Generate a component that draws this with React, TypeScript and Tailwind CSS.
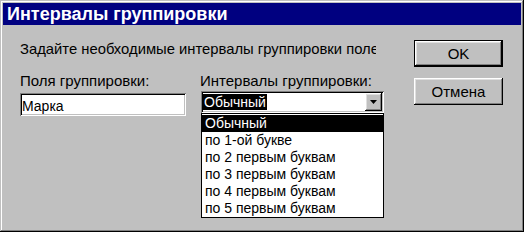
import React from "react";

const sunken =
  "shadow-[inset_1px_1px_0_#808080,inset_-1px_-1px_0_#ffffff,inset_2px_2px_0_#000000,inset_-2px_-2px_0_#c0c0c0]";
const raised =
  "shadow-[inset_-1px_-1px_0_#000000,inset_1px_1px_0_#ffffff,inset_-2px_-2px_0_#808080,inset_2px_2px_0_#dfdfdf]";

const options = [
  "Обычный",
  "по 1-ой букве",
  "по 2 первым буквам",
  "по 3 первым буквам",
  "по 4 первым буквам",
  "по 5 первым буквам",
];

function Win95Button({ label, isDefault }: { label: string; isDefault?: boolean }) {
  return (
    <div className={isDefault ? "border border-black" : ""}>
      <div
        className={`flex items-center justify-center bg-[#c0c0c0] ${
          isDefault ? "h-[25px]" : "h-[27px]"
        } ${raised}`}
      >
        <span className="text-[15px] leading-[17px] text-black">{label}</span>
      </div>
    </div>
  );
}

function ComboBox() {
  return (
    <div className={`relative h-[22px] w-[183px] bg-white ${sunken}`}>
      <div className="flex h-full items-stretch p-[2px]">
        <div className="flex flex-1 items-start pt-[1px]">
          <span className="bg-black px-[1px] text-[14px] leading-[16px] text-white">
            Обычный
          </span>
        </div>
        <div className={`flex w-[17px] items-center justify-center bg-[#c0c0c0] ${raised}`}>
          <svg width="7" height="4" viewBox="0 0 7 4">
            <path d="M0 0h7L3.5 4z" fill="#000" />
          </svg>
        </div>
      </div>
      <ul className="absolute left-0 top-full w-[183px] border border-black bg-white pt-[1px]">
        {options.map((o, i) => (
          <li
            key={o}
            className={`h-[17px] whitespace-nowrap pl-[3px] text-[14px] leading-[17px] ${
              i === 0 ? "bg-black text-white" : "text-black"
            }`}
          >
            {o}
          </li>
        ))}
      </ul>
    </div>
  );
}

export default function App() {
  return (
    <div
      className={`h-[232px] w-[524px] bg-[#c0c0c0] p-[3px] font-['Liberation_Sans',Arial,sans-serif] shadow-[inset_-1px_-1px_0_#000000,inset_1px_1px_0_#c0c0c0,inset_-2px_-2px_0_#808080,inset_2px_2px_0_#ffffff]`}
    >
      <div className="flex h-[22px] items-center bg-[#000080] pl-[4px]">
        <span className="text-[18px] font-bold leading-[22px] text-white">
          Интервалы группировки
        </span>
      </div>

      <div className="flex gap-[30px] pl-[17px] pt-[15px]">
        <div className="w-[364px] pt-[1px]">
          {/* clipped on purpose, as in the original dialog */}
          <div className="h-[17px] w-[356px] overflow-hidden whitespace-nowrap text-[14.8px] leading-[17px] text-black">
            Задайте необходимые интервалы группировки полей
          </div>

          <div className="mt-[14px] flex gap-[15px]">
            <div className="w-[166px]">
              <div className="text-[15px] leading-[17px] text-black">Поля группировки:</div>
              <div className={`mt-[4px] h-[23px] bg-white pl-[2px] pt-[1px] ${sunken}`}>
                <span className="text-[14px] leading-[16px] text-black">Марка</span>
              </div>
            </div>
            <div className="w-[183px]">
              <div className="-ml-[1px] whitespace-nowrap text-[15px] leading-[17px] text-black">
                Интервалы группировки:
              </div>
              <div className="mt-[2px]">
                <ComboBox />
              </div>
            </div>
          </div>
        </div>

        <div className="flex w-[89px] flex-col gap-[11px]">
          <Win95Button label="OK" isDefault />
          <Win95Button label="Отмена" />
        </div>
      </div>
    </div>
  );
}
